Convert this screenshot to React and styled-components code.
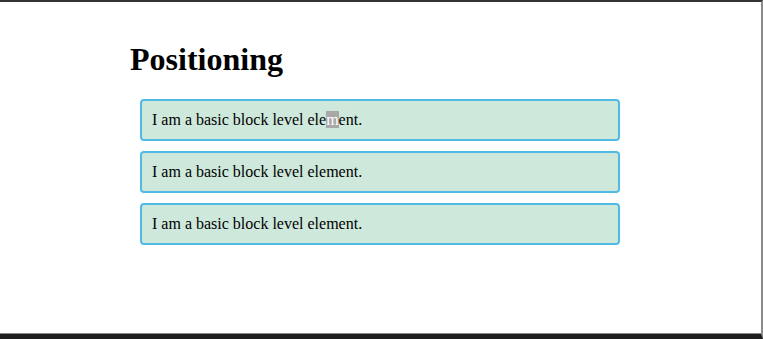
import React from 'react';
import styled, { createGlobalStyle } from 'styled-components';

const GlobalStyle = createGlobalStyle`
  html, body {
    margin: 0;
    padding: 0;
    background: #ffffff;
  }
  body {
    font-family: "Liberation Serif", "Times New Roman", serif;
    color: #000;
  }
`;

const Frame = styled.div`
  box-sizing: border-box;
  width: 763px;
  height: 339px;
  overflow: hidden;
  background: #fff;
  border-top: 2px solid #333;
  border-right: 2px solid #8a8a8a;
  border-bottom: 5px solid #1e1e1e;
  box-shadow: inset 0 -1px 0 #8a8a8a;
  padding: 18px 0 0 130px;
`;

const Title = styled.h1`
  font-size: 32px;
  font-weight: bold;
  margin: 21px 0 21px;
`;

const BlockList = styled.div`
  display: flex;
  flex-direction: column;
  gap: 10px;
  padding-left: 10px;
`;

const Block = styled.div`
  box-sizing: border-box;
  width: 480px;
  padding: 10px;
  font-size: 16px;
  background: #cfe8dc;
  border: 2px solid #52b9e4;
  border-radius: 4px;
`;

const Selected = styled.span`
  background: #a8a8a8;
  color: #fff;
`;

export default function App() {
  return (
    <>
      <GlobalStyle />
      <Frame>
        <Title>Positioning</Title>
        <BlockList>
          <Block>
            I am a basic block level ele<Selected>m</Selected>ent.
          </Block>
          <Block>I am a basic block level element.</Block>
          <Block>I am a basic block level element.</Block>
        </BlockList>
      </Frame>
    </>
  );
}
